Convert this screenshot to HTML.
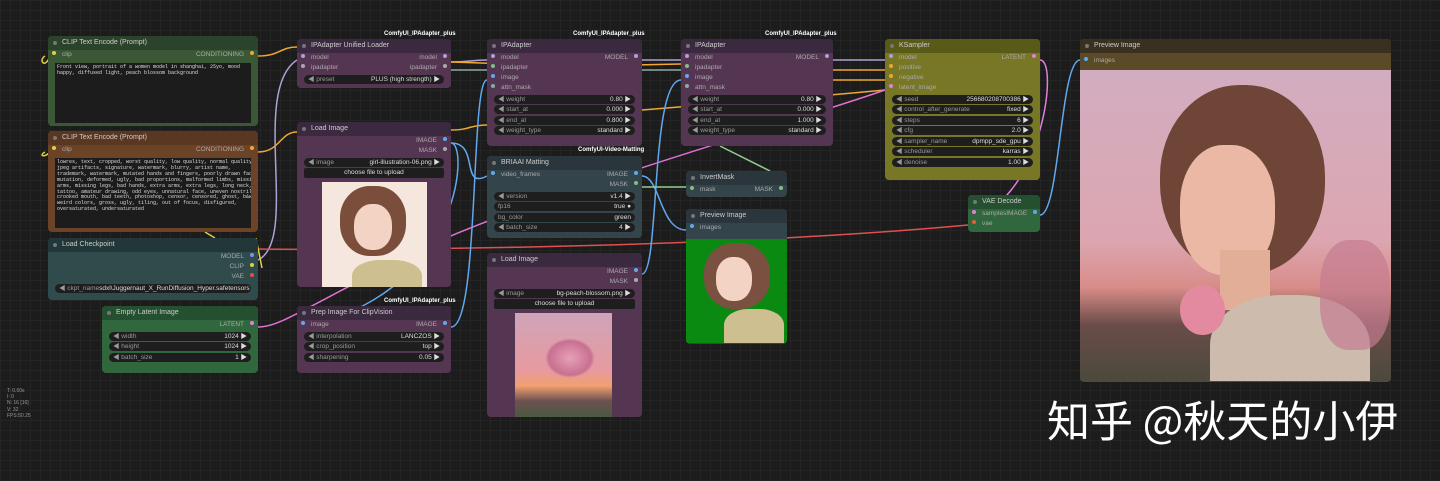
<!DOCTYPE html>
<html><head><meta charset="utf-8"><style>
*{box-sizing:border-box;margin:0;padding:0}
body{width:1440px;height:481px;overflow:hidden;position:relative;background-color:#1c1c1c;
background-image:linear-gradient(#242424 1px,transparent 1px),linear-gradient(90deg,#242424 1px,transparent 1px);background-size:10px 10px;
font-family:"Liberation Sans","Noto Sans CJK SC",sans-serif;color:#bbb}
.n{position:absolute;border-radius:4px;overflow:hidden;font-size:6.5px;white-space:nowrap}
.t{height:14px;line-height:14px;padding-left:14px;font-size:7px;color:#ccc;position:relative}
.t:before{content:"";position:absolute;left:5px;top:5px;width:4px;height:4px;border-radius:50%;background:#777}
.r{height:10px;line-height:10px;padding:0 7px;display:flex;justify-content:space-between;color:#aaa;position:relative;white-space:nowrap}
.r .l:before{content:"";display:inline-block;width:4px;height:4px;border-radius:50%;background:var(--c,#aaa);margin-right:3px;vertical-align:middle;position:relative;top:-1px;left:-3px}
.r .o:after{content:"";display:inline-block;width:4px;height:4px;border-radius:50%;background:var(--d,#aaa);margin-left:3px;vertical-align:middle;position:relative;top:-1px;left:3px}
.w{margin:1.5px 7px;height:9px;line-height:9px;border-radius:5px;background:#1e1e1e;display:flex;justify-content:space-between;padding:0 4px;color:#999;white-space:nowrap;overflow:hidden}
.w b{font-weight:normal;color:#ddd}
.btn{margin:1.5px 7px;height:10px;line-height:10px;background:#1e1e1e;text-align:center;color:#ddd;border-radius:2px}
.ta{margin:3px 7px;background:#1c1c1c;font-family:"Liberation Mono",monospace;font-size:5px;line-height:5.9px;color:#ddd;padding:2px;white-space:pre;overflow:hidden}
.lab{position:absolute;font-size:6px;color:#fff;font-weight:bold}
.g .t{background:#2c432b}.g{background:#3a5836}
.br .t{background:#5a3720}.br{background:#6d4328}
.tl .t{background:#223737}.tl{background:#2f4b4b}
.gl .t{background:#245030}.gl{background:#31673c}
.p .t{background:#3b2940}.p{background:#553652}
.s .t{background:#2a363c}.s{background:#34444b}
.k .t{background:#5a5a18}.k{background:#777726}
</style></head><body>
<svg style="position:absolute;left:0;top:0" width="1440" height="481" fill="none" stroke-width="1.5">
<path d="M258 56 C280 56 280 47 297 47" stroke="#f0a830"/>
<path d="M258 152 C280 152 280 132 297 132" stroke="#f0a830"/>
<path d="M451 62 C470 62 470 60 487 60 M642 60 H681 M833 60 H885" stroke="#b0a0d8"/>
<path d="M451 70 H487 M451 70 C560 70 560 70 681 70" stroke="#8aa"/>
<path d="M451 62 C560 66 600 66 681 64" stroke="#f0a830"/>
<path d="M833 70 C860 70 860 70 885 70 M833 80 C860 80 860 80 885 80" stroke="#f0a830"/>
<path d="M642 110 C760 100 780 100 885 90" stroke="#f0a830"/>
<path d="M451 130 C470 130 470 125 487 125" stroke="#f0a830"/>
<path d="M258 260 C300 240 250 90 297 60" stroke="#b0a0d8"/>
<path d="M258 249 C330 250 700 250 968 225" stroke="#e05050"/>
<path d="M258 327 C280 327 300 310 420 250 C520 200 800 120 885 90" stroke="#e070d0"/>
<path d="M451 143 C480 143 460 190 487 176 M451 143 C470 143 460 300 297 327" stroke="#60a8f0"/>
<path d="M451 327 C480 327 470 80 487 80" stroke="#60a8f0"/>
<path d="M642 274 C660 274 650 80 681 80" stroke="#60a8f0"/>
<path d="M642 176 C660 176 660 230 686 230" stroke="#60a8f0"/>
<path d="M642 187 H686 M720 146 L770 171" stroke="#90d090"/>
<path d="M1040 60 C1060 60 1040 200 975 215" stroke="#e080e0"/>
<path d="M1040 215 C1060 215 1060 60 1080 60" stroke="#60a8f0"/>
<path d="M45 56 C38 60 45 70 50 56 M45 152 C38 156 45 158 50 152 M205 232 L215 238 M256 238 L262 268" stroke="#e0d040"/>
</svg>

<div class="lab" style="left:384px;top:31px">ComfyUI_IPAdapter_plus</div>
<div class="lab" style="left:573px;top:31px">ComfyUI_IPAdapter_plus</div>
<div class="lab" style="left:765px;top:31px">ComfyUI_IPAdapter_plus</div>
<div class="lab" style="left:578px;top:147px">ComfyUI-Video-Matting</div>
<div class="lab" style="left:384px;top:298px">ComfyUI_IPAdapter_plus</div>

<div class="n g" style="left:48px;top:36px;width:210px;height:90px"><div class="t">CLIP Text Encode (Prompt)</div>
<div class="r"><span class="l" style="--c:#e0d040">clip</span><span class="o" style="--d:#f0a830">CONDITIONING</span></div>
<div class="ta" style="height:60px">Front view, portrait of a women model in shanghai, 25yo, mood
happy, diffused light, peach blossom background</div></div>

<div class="n br" style="left:48px;top:131px;width:210px;height:101px"><div class="t">CLIP Text Encode (Prompt)</div>
<div class="r"><span class="l" style="--c:#e0d040">clip</span><span class="o" style="--d:#f0a830">CONDITIONING</span></div>
<div class="ta" style="height:70px">lowres, text, cropped, worst quality, low quality, normal quality,
jpeg artifacts, signature, watermark, blurry, artist name,
trademark, watermark, mutated hands and fingers, poorly drawn face,
mutation, deformed, ugly, bad proportions, malformed limbs, missing
arms, missing legs, bad hands, extra arms, extra legs, long neck,
tattoo, amateur drawing, odd eyes, unnatural face, uneven nostrils,
crooked mouth, bad teeth, photoshop, censor, censored, ghost, b&amp;w,
weird colors, gross, ugly, tiling, out of focus, disfigured,
oversaturated, undersaturated</div></div>

<div class="n tl" style="left:48px;top:238px;width:210px;height:62px"><div class="t">Load Checkpoint</div>
<div class="r" style="justify-content:flex-end"><span class="o" style="--d:#8090f0">MODEL</span></div>
<div class="r" style="justify-content:flex-end"><span class="o" style="--d:#e0d040">CLIP</span></div>
<div class="r" style="justify-content:flex-end"><span class="o" style="--d:#e05050">VAE</span></div>
<div class="w"><span>◀ ckpt_name</span><b>sdxl\Juggernaut_X_RunDiffusion_Hyper.safetensors ▶</b></div></div>

<div class="n gl" style="left:102px;top:306px;width:156px;height:67px"><div class="t">Empty Latent Image</div>
<div class="r" style="justify-content:flex-end"><span class="o" style="--d:#e080e0">LATENT</span></div>
<div class="w"><span>◀ width</span><b>1024 ▶</b></div><div class="w"><span>◀ height</span><b>1024 ▶</b></div><div class="w"><span>◀ batch_size</span><b>1 ▶</b></div></div>

<div class="n p" style="left:297px;top:39px;width:154px;height:49px"><div class="t">IPAdapter Unified Loader</div>
<div class="r"><span class="l" style="--c:#b0a0d8">model</span><span class="o" style="--d:#b0a0d8">model</span></div>
<div class="r"><span class="l">ipadapter</span><span class="o">ipadapter</span></div>
<div class="w"><span>◀ preset</span><b>PLUS (high strength) ▶</b></div></div>

<div class="n p" style="left:297px;top:122px;width:154px;height:165px"><div class="t">Load Image</div>
<div class="r" style="justify-content:flex-end"><span class="o" style="--d:#60a8f0">IMAGE</span></div>
<div class="r" style="justify-content:flex-end"><span class="o">MASK</span></div>
<div class="w"><span>◀ image</span><b>girl-illustration-06.png ▶</b></div>
<div class="btn">choose file to upload</div>
<div style="position:absolute;left:25px;top:60px;width:105px;height:105px;background:#f5e6de;overflow:hidden">
<div style="position:absolute;left:18px;top:4px;width:66px;height:70px;border-radius:45%;background:#7a4e3a"></div>
<div style="position:absolute;left:32px;top:22px;width:38px;height:46px;border-radius:45%;background:#f3d3c3"></div>
<div style="position:absolute;left:30px;top:78px;width:70px;height:40px;border-radius:40% 40% 0 0;background:#cdbf90"></div></div></div>

<div class="n p" style="left:297px;top:306px;width:154px;height:67px"><div class="t">Prep Image For ClipVision</div>
<div class="r"><span class="l" style="--c:#60a8f0">image</span><span class="o" style="--d:#60a8f0">IMAGE</span></div>
<div class="w"><span>◀ interpolation</span><b>LANCZOS ▶</b></div><div class="w"><span>◀ crop_position</span><b>top ▶</b></div><div class="w"><span>◀ sharpening</span><b>0.05 ▶</b></div></div>

<div class="n p" style="left:487px;top:39px;width:155px;height:107px"><div class="t">IPAdapter</div>
<div class="r"><span class="l" style="--c:#b0a0d8">model</span><span class="o" style="--d:#b0a0d8">MODEL</span></div>
<div class="r"><span class="l" style="--c:#80c080">ipadapter</span></div>
<div class="r"><span class="l" style="--c:#60a8f0">image</span></div>
<div class="r"><span class="l" style="--c:#80b0a0">attn_mask</span></div>
<div class="w"><span>◀ weight</span><b>0.80 ▶</b></div><div class="w"><span>◀ start_at</span><b>0.000 ▶</b></div><div class="w"><span>◀ end_at</span><b>0.800 ▶</b></div><div class="w"><span>◀ weight_type</span><b>standard ▶</b></div></div>

<div class="n s" style="left:487px;top:156px;width:155px;height:82px"><div class="t">BRIAAI Matting</div>
<div class="r"><span class="l" style="--c:#60a8f0">video_frames</span><span class="o" style="--d:#60a8f0">IMAGE</span></div>
<div class="r" style="justify-content:flex-end"><span class="o" style="--d:#80c080">MASK</span></div>
<div class="w"><span>◀ version</span><b>v1.4 ▶</b></div><div class="w"><span>fp16</span><b>true ●</b></div><div class="w"><span>bg_color</span><b>green</b></div><div class="w"><span>◀ batch_size</span><b>4 ▶</b></div></div>

<div class="n p" style="left:487px;top:253px;width:155px;height:164px"><div class="t">Load Image</div>
<div class="r" style="justify-content:flex-end"><span class="o" style="--d:#60a8f0">IMAGE</span></div>
<div class="r" style="justify-content:flex-end"><span class="o">MASK</span></div>
<div class="w"><span>◀ image</span><b>bg-peach-blossom.png ▶</b></div>
<div class="btn">choose file to upload</div>
<div style="position:absolute;left:28px;top:60px;width:97px;height:104px;background:linear-gradient(#cfa4b8,#e79aa0 55%,#f0a070 70%,#6a5050 85%,#4a5a40)">
<div style="position:absolute;left:30px;top:25px;width:50px;height:40px;border-radius:50%;background:radial-gradient(#e8a0b8,#c87090 60%,transparent 70%)"></div></div></div>

<div class="n p" style="left:681px;top:39px;width:152px;height:107px"><div class="t">IPAdapter</div>
<div class="r"><span class="l" style="--c:#b0a0d8">model</span><span class="o" style="--d:#b0a0d8">MODEL</span></div>
<div class="r"><span class="l" style="--c:#80c080">ipadapter</span></div>
<div class="r"><span class="l" style="--c:#60a8f0">image</span></div>
<div class="r"><span class="l" style="--c:#80b0a0">attn_mask</span></div>
<div class="w"><span>◀ weight</span><b>0.80 ▶</b></div><div class="w"><span>◀ start_at</span><b>0.000 ▶</b></div><div class="w"><span>◀ end_at</span><b>1.000 ▶</b></div><div class="w"><span>◀ weight_type</span><b>standard ▶</b></div></div>

<div class="n s" style="left:686px;top:171px;width:101px;height:26px"><div class="t">InvertMask</div>
<div class="r"><span class="l" style="--c:#80c080">mask</span><span class="o" style="--d:#80c080">MASK</span></div></div>

<div class="n s" style="left:686px;top:209px;width:101px;height:135px"><div class="t">Preview Image</div>
<div class="r"><span class="l" style="--c:#60a8f0">images</span></div>
<div style="position:absolute;left:0;top:30px;width:101px;height:104px;background:#0a8a10;overflow:hidden">
<div style="position:absolute;left:18px;top:4px;width:66px;height:66px;border-radius:45%;background:#7a5040"></div>
<div style="position:absolute;left:30px;top:18px;width:36px;height:44px;border-radius:45%;background:#f3d3c3"></div>
<div style="position:absolute;left:38px;top:70px;width:60px;height:40px;border-radius:40% 40% 0 0;background:#cdbf90"></div></div></div>

<div class="n k" style="left:885px;top:39px;width:155px;height:141px"><div class="t">KSampler</div>
<div class="r"><span class="l" style="--c:#b0a0d8">model</span><span class="o" style="--d:#e080e0">LATENT</span></div>
<div class="r"><span class="l" style="--c:#f0a830">positive</span></div>
<div class="r"><span class="l" style="--c:#f0a830">negative</span></div>
<div class="r"><span class="l" style="--c:#e080e0">latent_image</span></div>
<div class="w"><span>◀ seed</span><b>256680208700386 ▶</b></div><div class="w"><span>◀ control_after_generate</span><b>fixed ▶</b></div><div class="w"><span>◀ steps</span><b>6 ▶</b></div><div class="w"><span>◀ cfg</span><b>2.0 ▶</b></div><div class="w"><span>◀ sampler_name</span><b>dpmpp_sde_gpu ▶</b></div><div class="w"><span>◀ scheduler</span><b>karras ▶</b></div><div class="w"><span>◀ denoise</span><b>1.00 ▶</b></div></div>

<div class="n gl" style="left:968px;top:195px;width:72px;height:37px"><div class="t">VAE Decode</div>
<div class="r"><span class="l" style="--c:#e080e0">samples</span><span class="o" style="--d:#60a8f0">IMAGE</span></div>
<div class="r"><span class="l" style="--c:#e06040">vae</span></div></div>

<div class="n" style="left:1080px;top:39px;width:311px;height:343px;background:#5a4a28"><div class="t" style="background:#3a3020">Preview Image</div>
<div class="r" style="height:16px;line-height:16px"><span class="l" style="--c:#60a8f0">images</span></div>
<div style="position:absolute;left:0;top:31px;width:311px;height:311px;background:linear-gradient(#d2adc0,#dca6b0 55%,#d88c88 70%,#6a4c48 82%,#4c4a3c);overflow:hidden">
<div style="position:absolute;left:80px;top:15px;width:165px;height:190px;border-radius:48%;background:#6e4536"></div>
<div style="position:absolute;left:100px;top:75px;width:95px;height:130px;border-radius:45%;background:#eab8a4"></div>
<div style="position:absolute;left:140px;top:180px;width:50px;height:60px;background:#e2ae98"></div>
<div style="position:absolute;left:130px;top:225px;width:160px;height:110px;border-radius:45% 45% 0 0;background:#cdbbae"></div>
<div style="position:absolute;left:100px;top:215px;width:45px;height:50px;border-radius:50%;background:#e48aa0"></div>
<div style="position:absolute;left:240px;top:170px;width:70px;height:110px;border-radius:40%;background:#c47c90;opacity:.7"></div></div></div>

<div style="position:absolute;left:1047px;top:392px;font-size:43px;color:#fff;font-family:'Noto Sans CJK SC',sans-serif;line-height:54px;white-space:nowrap">知乎 @秋天的小伊</div>

<div style="position:absolute;left:7px;top:388px;font-size:5px;line-height:6.2px;color:#999">T: 0.00s<br>I: 0<br>N: 16 [16]<br>V: 32<br>FPS:50.25</div>
</body></html>
